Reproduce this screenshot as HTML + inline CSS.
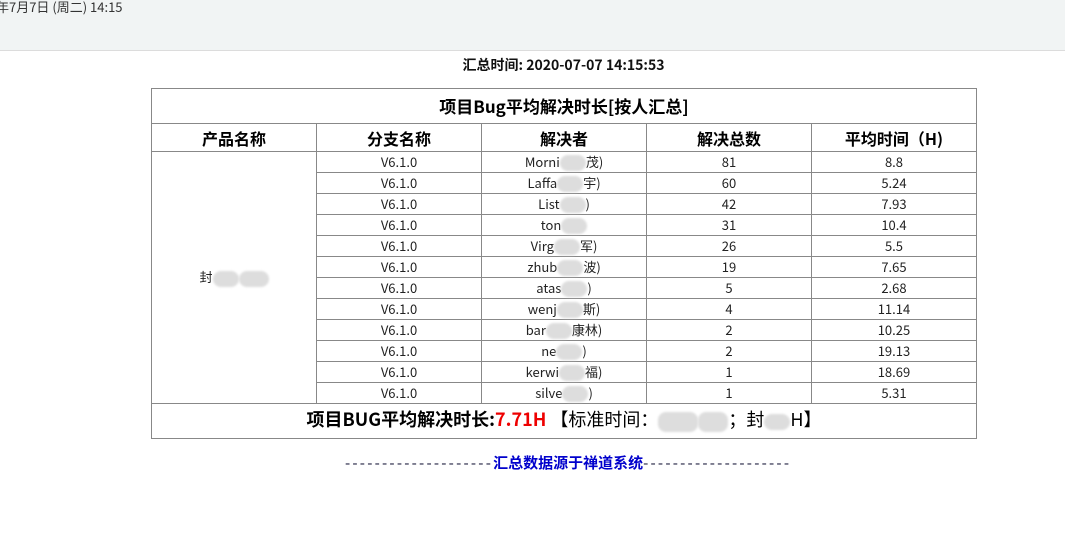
<!DOCTYPE html><html><head><meta charset="utf-8"><style>
body{margin:0;width:1065px;height:555px;background:#fff;font-family:"Noto Sans CJK SC","Liberation Sans",sans-serif;position:relative;overflow:hidden}
.top{position:absolute;left:0;top:0;width:1065px;height:50px;background:#f1f4f4;border-bottom:1px solid #dcdcdc}
.top span{position:absolute;left:-4px;top:-3px;font-size:13px;color:#333}
.time{position:absolute;top:55px;left:0;width:1127px;text-align:center;font-size:14px;font-weight:bold;color:#111}
table{position:absolute;left:151px;top:88px;width:826px;border-collapse:collapse;border:1px solid #333}
td{border:1px solid #888;text-align:center;font-size:13px;color:#222;height:20px;line-height:18px;padding:0;width:165px}
.t td{height:34px;font-size:17px;font-weight:bold;color:#000}
.h td{height:27px;font-size:16px;font-weight:bold;color:#000}
.f td{height:34px;font-size:18px;color:#000}
.b{display:inline-block;width:26px;height:16px;background:#ddd;border-radius:8px;vertical-align:middle;filter:blur(1px)}
.foot{position:absolute;top:452px;left:345px;font-size:15px;color:#00c;white-space:nowrap}
.d{letter-spacing:2.2px;color:#113}
</style></head><body>
<div class="top"><span>年7月7日 (周二) 14:15</span></div>
<div class="time">汇总时间: 2020-07-07 14:15:53</div>
<table>
<tr class="t"><td colspan="5">项目Bug平均解决时长[按人汇总]</td></tr>
<tr class="h"><td>产品名称</td><td>分支名称</td><td>解决者</td><td>解决总数</td><td>平均时间（H)</td></tr>
<tr><td rowspan="12">封<span class="b"></span><span class="b" style="width:30px"></span></td><td>V6.1.0</td><td>Morni<span class="b"></span>茂)</td><td>81</td><td>8.8</td></tr>
<tr><td>V6.1.0</td><td>Laffa<span class="b"></span>宇)</td><td>60</td><td>5.24</td></tr>
<tr><td>V6.1.0</td><td>List<span class="b"></span>)</td><td>42</td><td>7.93</td></tr>
<tr><td>V6.1.0</td><td>ton<span class="b"></span></td><td>31</td><td>10.4</td></tr>
<tr><td>V6.1.0</td><td>Virg<span class="b"></span>军)</td><td>26</td><td>5.5</td></tr>
<tr><td>V6.1.0</td><td>zhub<span class="b"></span>波)</td><td>19</td><td>7.65</td></tr>
<tr><td>V6.1.0</td><td>atas<span class="b"></span>)</td><td>5</td><td>2.68</td></tr>
<tr><td>V6.1.0</td><td>wenj<span class="b"></span>斯)</td><td>4</td><td>11.14</td></tr>
<tr><td>V6.1.0</td><td>bar<span class="b"></span>康林)</td><td>2</td><td>10.25</td></tr>
<tr><td>V6.1.0</td><td>ne<span class="b"></span>)</td><td>2</td><td>19.13</td></tr>
<tr><td>V6.1.0</td><td>kerwi<span class="b"></span>福)</td><td>1</td><td>18.69</td></tr>
<tr><td>V6.1.0</td><td>silve<span class="b"></span>)</td><td>1</td><td>5.31</td></tr>
<tr class="f"><td colspan="5"><b>项目BUG平均解决时长:<span style="color:#e00">7.71H</span></b> 【标准时间：<span class="b" style="width:40px;height:20px"></span><span class="b" style="width:30px;height:20px"></span>；封<span class="b"></span>H】</td></tr>
</table>
<div class="foot"><span class="d">--------------------</span><b>汇总数据源于禅道系统</b><span class="d">--------------------</span></div>
</body></html>
